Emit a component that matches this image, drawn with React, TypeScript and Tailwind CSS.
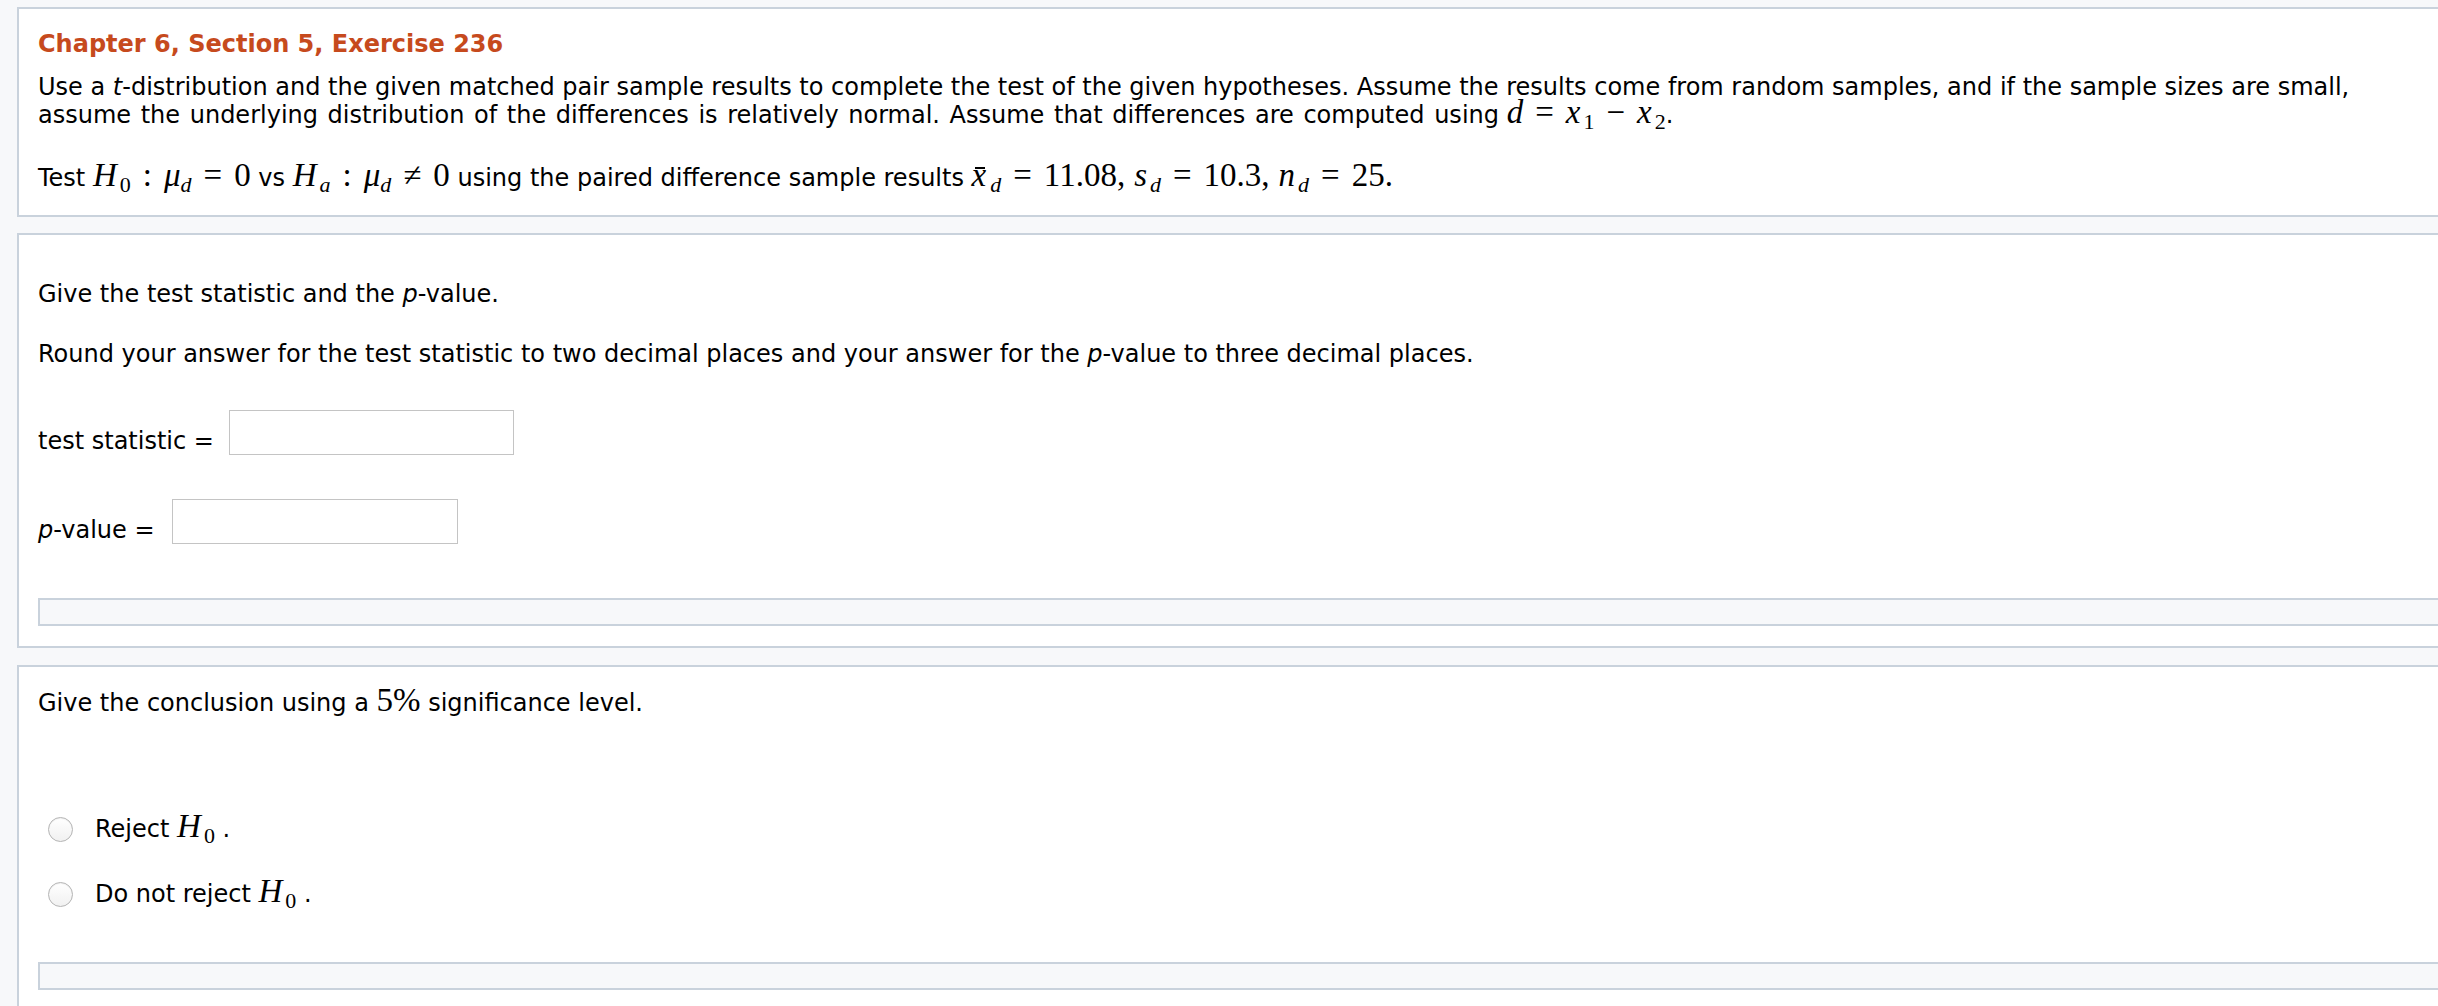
import React from 'react'

const serif = "font-['Liberation_Serif','Times_New_Roman',serif] text-[33px] leading-[20px]"

function V({ children, wide = false }: { children: React.ReactNode; wide?: boolean }) {
  return <span className={wide ? 'mr-[3px] italic' : 'italic'}>{children}</span>
}

function Sub({ children }: { children: React.ReactNode }) {
  return <span className="relative top-[6px] text-[22px] not-italic">{children}</span>
}

function ItSub({ children }: { children: React.ReactNode }) {
  return <span className="relative top-[6px] text-[22px] italic">{children}</span>
}

function Rel({ children }: { children: React.ReactNode }) {
  return <span className="mx-[12px] not-italic">{children}</span>
}

function M({ children }: { children: React.ReactNode }) {
  return <span className={serif}>{children}</span>
}

function FeedbackBar() {
  return <div className="h-[28px] border-2 border-r-0 border-[#c9d2dc] bg-[#f7f8fa]" />
}

function Radio({ label }: { label: React.ReactNode }) {
  return (
    <label className="flex items-center">
      <span className="ml-[10px] h-[25px] w-[25px] shrink-0 rounded-full border border-[#b4b4b4] bg-gradient-to-b from-white to-[#f1f1f1] shadow-[inset_0_1px_1px_rgba(0,0,0,0.06)]" />
      <span className="ml-[22px]">{label}</span>
    </label>
  )
}

function H0() {
  return (
    <M>
      <V wide>H</V>
      <Sub>0</Sub>
    </M>
  )
}

export default function App() {
  return (
    <div className="min-h-screen overflow-hidden bg-[#f7f8fa] pl-[17px] pt-[7px] font-['DejaVu_Sans',Verdana,sans-serif] text-[24px] leading-[28px] text-black">
      {/* exercise statement */}
      <section className="border-2 border-r-0 border-[#c9d2dc] bg-white pb-[23px] pl-[19px] pr-[20px] pt-[21px]">
        <h1 className="font-bold text-[#c64a1d]">Chapter 6, Section 5, Exercise 236</h1>
        <p className="mt-[15px]">
          Use a <V>t</V>-distribution and the given matched pair sample results to complete the test of the given hypotheses. Assume the results come from random samples, and if the sample sizes are small,
          <br />
          <span className="[word-spacing:2px]">
            assume the underlying distribution of the differences is relatively normal. Assume that differences are computed using
          </span>{' '}
          <M>
            <V>d</V>
            <Rel>=</Rel>
            <V wide>x</V>
            <Sub>1</Sub>
            <Rel>−</Rel>
            <V wide>x</V>
            <Sub>2</Sub>
          </M>
          .
        </p>
        <p className="mt-[35px]">
          Test{' '}
          <M>
            <V wide>H</V>
            <Sub>0</Sub>
            <Rel>:</Rel>
            <V>μ</V>
            <ItSub>d</ItSub>
            <Rel>=</Rel>0
          </M>{' '}
          vs{' '}
          <M>
            <V wide>H</V>
            <ItSub>a</ItSub>
            <Rel>:</Rel>
            <V>μ</V>
            <ItSub>d</ItSub>
            <Rel>≠</Rel>0
          </M>{' '}
          using the paired difference sample results{' '}
          <M>
            <span className="relative mr-[4px] inline-block italic">
              x
              <span className="absolute left-[3px] right-[1px] top-[2px] h-[1.5px] bg-black" />
            </span>
            <ItSub>d</ItSub>
            <Rel>=</Rel>11.08,<span className="ml-[9px]" />
            <V wide>s</V>
            <ItSub>d</ItSub>
            <Rel>=</Rel>10.3,<span className="ml-[9px]" />
            <V wide>n</V>
            <ItSub>d</ItSub>
            <Rel>=</Rel>25.
          </M>
        </p>
      </section>

      {/* test statistic and p-value */}
      <section className="mt-[16px] border-2 border-r-0 border-[#c9d2dc] bg-white pb-[20px] pl-[19px] pt-[45px]">
        <p>
          Give the test statistic and the <V>p</V>-value.
        </p>
        <p className="mt-[32px]">
          Round your answer for the test statistic to two decimal places and your answer for the <V>p</V>-value to three decimal places.
        </p>
        <div className="mt-[42px] flex items-end">
          <span>test statistic =</span>
          <input type="text" className="ml-[15px] h-[45px] w-[285px] border border-[#c4c4c4] bg-white outline-none" />
        </div>
        <div className="mt-[44px] flex items-end">
          <span>
            <V>p</V>-value =
          </span>
          <input type="text" className="ml-[17px] h-[45px] w-[286px] border border-[#c4c4c4] bg-white outline-none" />
        </div>
        <div className="mt-[54px]">
          <FeedbackBar />
        </div>
      </section>

      {/* conclusion */}
      <section className="mt-[17px] border-2 border-b-0 border-r-0 border-[#c9d2dc] bg-white pb-[20px] pl-[19px] pt-[22px]">
        <p>
          Give the conclusion using a <M>5%</M> significance level.
        </p>
        <div className="mt-[98px]">
          <Radio
            label={
              <>
                Reject <H0 /> .
              </>
            }
          />
        </div>
        <div className="mt-[37px]">
          <Radio
            label={
              <>
                Do not reject <H0 /> .
              </>
            }
          />
        </div>
        <div className="mt-[54px]">
          <FeedbackBar />
        </div>
      </section>
    </div>
  )
}
